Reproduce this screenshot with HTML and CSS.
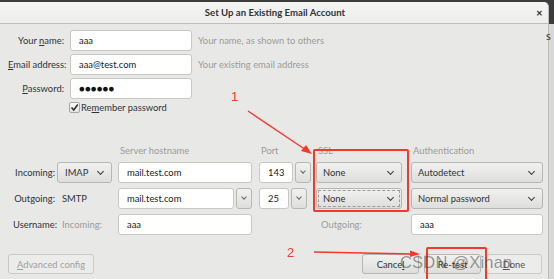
FILE: index.html
```html
<!DOCTYPE html>
<html lang="en">
  <head>
    <meta charset="UTF-8" />
    <title>Set Up an Existing Email Account</title>
    <link rel="stylesheet" href="styles.css">
  </head>
  <body>
    <div class="screen">
      <div class="dialog">
        <div class="titlebar">
          <span class="title">Set Up an Existing Email Account</span>
          <span class="close">&#x2715;</span>
        </div>

        <div class="content">
          <div class="identity">
            <label class="lbl">Your <u>n</u>ame:</label>
            <div class="input wide">aaa</div>
            <span class="hint">Your name, as shown to others</span>

            <label class="lbl"><u>E</u>mail address:</label>
            <div class="input wide">aaa@test.com</div>
            <span class="hint">Your existing email address</span>

            <label class="lbl"><u>P</u>assword:</label>
            <div class="input wide dots">&#x25CF;&#x25CF;&#x25CF;&#x25CF;&#x25CF;&#x25CF;</div>
            <span></span>

            <span></span>
            <div class="remember">
              <span class="check">
                <svg width="9" height="9" viewBox="0 0 9 9"><path d="M1.5 4.5 L3.7 7 L7.8 1.5" fill="none" stroke="#333" stroke-width="1.6"/></svg>
              </span>
              <span>Re<u>m</u>ember password</span>
            </div>
          </div>

          <div class="server">
            <span></span>
            <span></span>
            <span class="colhead">Server hostname</span>
            <span class="colhead">Port</span>
            <span class="colhead">SSL</span>
            <span class="colhead">Authentication</span>

            <span class="rowlbl">Incoming:</span>
            <div class="btn select proto">IMAP <i class="chev"></i></div>
            <div class="input host">mail.test.com</div>
            <div class="combo port"><div class="input">143</div><div class="btn arrow"><i class="chev small"></i></div></div>
            <div class="btn select ssl">None <i class="chev"></i></div>
            <div class="btn select auth">Autodetect <i class="chev"></i></div>

            <span class="rowlbl">Outgoing:</span>
            <span class="plain">SMTP</span>
            <div class="combo host"><div class="input">mail.test.com</div><div class="btn arrow"><i class="chev small"></i></div></div>
            <div class="combo port"><div class="input">25</div><div class="btn arrow"><i class="chev small"></i></div></div>
            <div class="btn select ssl focus">None <i class="chev"></i></div>
            <div class="btn select auth">Normal password <i class="chev"></i></div>

            <span class="rowlbl user">Username:</span>
            <span class="plain muted">Incoming:</span>
            <div class="input host">aaa</div>
            <span></span>
            <span class="plain muted">Outgoing:</span>
            <div class="input auth">aaa</div>
          </div>

          <div class="actions">
            <div class="btn disabled adv"><span><u>A</u>dvanced config</span></div>
            <div class="right">
              <div class="btn"><span>Cance<u>l</u></span></div>
              <div class="btn">Re-test</div>
              <div class="btn disabled done"><span><u>D</u>one</span></div>
            </div>
          </div>
        </div>
      </div>
      <div class="behind">s</div>

      <!-- annotations drawn over the screenshot -->
      <span class="mark mark-1">1</span>
      <span class="mark mark-2">2</span>
      <svg class="arrows" width="554" height="279" viewBox="0 0 554 279">
        <line x1="248" y1="111" x2="306" y2="150" stroke="#f03a2e" stroke-width="1.4"/>
        <path d="M312 154 L301 151 L306 145 Z" fill="#f03a2e"/>
        <line x1="314" y1="252" x2="412" y2="254" stroke="#f03a2e" stroke-width="1.4"/>
        <path d="M420 254 L410 250.5 L410 257 Z" fill="#f03a2e"/>
      </svg>
      <div class="box box-ssl"></div>
      <div class="box box-retest"></div>
      <span class="watermark">CSDN @Xinan</span>
    </div>
  </body>
</html>
```

FILE: styles.css
```css
* {
  box-sizing: border-box;
}

body {
  margin: 0;
  font-family: Lato, "Liberation Sans", sans-serif;
  font-size: 9.4px;
  color: #2e3436;
  background: #5a5a5a;
}

u {
  text-decoration: underline;
  text-underline-offset: 1px;
}

.screen {
  position: relative;
  width: 554px;
  height: 279px;
  overflow: hidden;
  background: #3c3c3c;
  padding-top: 2px;
  display: flex;
}

.dialog {
  width: 549px;
  height: 277px;
  background: #e8e8e7;
  border-radius: 0 5px 0 0;
  border-right: 1px solid #bdbdbb;
  display: flex;
  flex-direction: column;
  flex-shrink: 0;
}

.behind {
  flex: 1;
  background: #d8d8d6;
  margin-top: 22px;
  padding-top: 5px;
  font-size: 11px;
  color: #333;
  text-indent: -3px;
}

.titlebar {
  height: 22px;
  background: linear-gradient(#f4f4f3, #ededec);
  border-bottom: 1px solid #bdbdbb;
  border-radius: 0 5px 0 0;
  display: flex;
  align-items: center;
  justify-content: center;
  position: relative;
  flex-shrink: 0;
}

.title {
  font-weight: bold;
  font-size: 9.6px;
  color: #2e3436;
  margin-left: 2px;
}

.close {
  position: absolute;
  right: 5px;
  top: 6px;
  font-size: 8px;
  font-weight: bold;
  color: #333;
}

.content {
  flex: 1;
  padding: 6px 6px 0 8px;
  display: flex;
  flex-direction: column;
}

.identity {
  display: grid;
  grid-template-columns: 56px 128px 1fr;
  row-gap: 3px;
  align-items: center;
}

.lbl {
  text-align: right;
  white-space: nowrap;
  color: #2e3436;
}

.identity .input {
  margin-left: 6px;
}

.hint {
  color: #9a9c98;
  padding-left: 6px;
}

.input {
  height: 21px;
  background: #fff;
  border: 1px solid #c7c7c4;
  border-radius: 3px;
  padding: 0 8px;
  display: flex;
  align-items: center;
  color: #1a1a1a;
  white-space: nowrap;
}

.input.wide {
  width: 122px;
}

.dots {
  font-size: 9.5px;
  letter-spacing: 0.2px;
  color: #111;
}

.remember {
  grid-column: 2 / 4;
  margin-left: 5px;
  display: flex;
  align-items: center;
  gap: 1px;
}

.check {
  width: 11px;
  height: 11px;
  border: 1px solid #a8a8a5;
  border-radius: 2px;
  background: linear-gradient(#fafafa, #e4e4e2);
  display: flex;
  align-items: center;
  justify-content: center;
}

.server {
  margin-top: 30px;
  display: grid;
  grid-template-columns: 49px 61px 141px 57px 95px 132px;
  grid-template-rows: 14px 21px 21px 21px;
  row-gap: 5px;
  align-items: center;
  white-space: nowrap;
}

.colhead {
  color: #9a9c98;
  align-self: end;
  padding-left: 2px;
  margin-bottom: 1px;
}

.rowlbl {
  text-align: right;
  padding-right: 2px;
}

.rowlbl.user {
  padding-right: 0;
  margin-left: -1px;
}

.plain {
  padding-left: 5px;
}

.muted {
  color: #9a9c98;
}

.btn {
  height: 21px;
  border: 1px solid #b6b6b3;
  border-radius: 3px;
  background: linear-gradient(#f1f1f0, #dededc);
  display: flex;
  align-items: center;
  justify-content: center;
  padding: 0 8px;
  color: #2e3436;
  white-space: nowrap;
}

.select {
  justify-content: space-between;
  padding: 0 8px 0 6px;
}

.proto {
  width: 55px;
  padding-left: 7px;
}

.host {
  width: 134px;
}

.combo {
  display: flex;
  gap: 2px;
}

.combo .input {
  flex: 1;
}

.port {
  width: 48px;
}

.arrow {
  width: 16px;
  padding: 0;
  flex-shrink: 0;
}

.ssl {
  width: 86px;
}

.ssl.focus {
  outline: 1px dashed #9c9c99;
  outline-offset: -3px;
}

.auth {
  width: 132px;
}

.chev {
  width: 5px;
  height: 5px;
  border-right: 1.5px solid #3a3a3a;
  border-bottom: 1.5px solid #3a3a3a;
  transform: rotate(45deg);
  margin-top: -3px;
}

.chev.small {
  width: 4px;
  height: 4px;
  border-width: 1px;
  border-color: #666;
}

.actions {
  margin-top: 19px;
  display: flex;
  justify-content: space-between;
}

.actions .btn {
  height: 20px;
  padding: 0 9px;
}

.actions .adv {
  width: 86px;
}

.actions .right {
  display: flex;
  gap: 5px;
}

.actions .right .btn {
  width: 57px;
}

.btn.disabled {
  color: #a0a19e;
  background: #ececeb;
  border-color: #c9c9c6;
}

.actions .right .btn.done {
  width: 56px;
  color: #555;
}

.mark {
  position: absolute;
  color: #f03a2e;
  font-family: "Liberation Sans", sans-serif;
  font-size: 13px;
}

.mark-1 {
  left: 231px;
  top: 89px;
}

.mark-2 {
  left: 287px;
  top: 245px;
}

.arrows {
  position: absolute;
  left: 0;
  top: 0;
}

.box {
  position: absolute;
  border: 2px solid #f03a2e;
  border-radius: 2px;
}

.box-ssl {
  left: 313px;
  top: 149px;
  width: 96px;
  height: 63px;
}

.box-retest {
  left: 426px;
  top: 247px;
  width: 61px;
  height: 34px;
}

.watermark {
  position: absolute;
  left: 400px;
  top: 253px;
  font-family: "Liberation Sans", sans-serif;
  font-size: 16.5px;
  color: rgba(70, 70, 70, 0.55);
  letter-spacing: 0.2px;
}
```
